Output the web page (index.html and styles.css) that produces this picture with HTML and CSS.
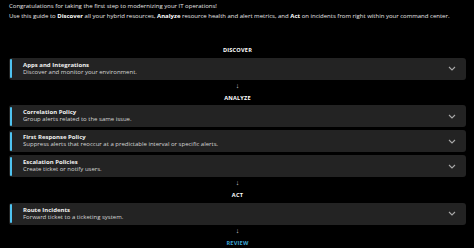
FILE: index.html
```html
<!DOCTYPE html>
<html>
<head>
<meta charset="utf-8">
<link rel="stylesheet" href="styles.css">
</head>
<body>
<div class="intro">
  <p>Congratulations for taking the first step to modernizing your IT operations!</p>
  <p>Use this guide to <b>Discover</b> all your hybrid resources, <b>Analyze</b> resource health and alert metrics, and <b>Act</b> on incidents from right within your command center.</p>
</div>
<div class="flow">
  <div class="stage first">DISCOVER</div>
  <div class="cards">
    <div class="card"><span class="bar"></span><div class="txt"><div class="title">Apps and Integrations</div><div class="desc">Discover and monitor your environment.</div></div><svg class="chev" viewBox="0 0 8 5"><path d="M1 1L4 4L7 1"/></svg></div>
  </div>
  <div class="arrow">↓</div>
  <div class="stage">ANALYZE</div>
  <div class="cards">
    <div class="card"><span class="bar"></span><div class="txt"><div class="title">Correlation Policy</div><div class="desc">Group alerts related to the same issue.</div></div><svg class="chev" viewBox="0 0 8 5"><path d="M1 1L4 4L7 1"/></svg></div>
    <div class="card"><span class="bar"></span><div class="txt"><div class="title">First Response Policy</div><div class="desc">Suppress alerts that reoccur at a predictable interval or specific alerts.</div></div><svg class="chev" viewBox="0 0 8 5"><path d="M1 1L4 4L7 1"/></svg></div>
    <div class="card"><span class="bar"></span><div class="txt"><div class="title">Escalation Policies</div><div class="desc">Create ticket or notify users.</div></div><svg class="chev" viewBox="0 0 8 5"><path d="M1 1L4 4L7 1"/></svg></div>
  </div>
  <div class="arrow">↓</div>
  <div class="stage">ACT</div>
  <div class="cards">
    <div class="card"><span class="bar"></span><div class="txt"><div class="title">Route Incidents</div><div class="desc">Forward ticket to a ticketing system.</div></div><svg class="chev" viewBox="0 0 8 5"><path d="M1 1L4 4L7 1"/></svg></div>
  </div>
  <div class="arrow">↓</div>
  <div class="stage review">REVIEW</div>
</div>
</body>
</html>
```
FILE: styles.css
```css
html, body {
  margin: 0;
  background: #000;
}
body {
  padding: 1px 8px 0 9px;
  font-family: "Open Sans", "Noto Sans", sans-serif;
  color: #e6e6e6;
  font-size: 6px;
}
.intro p {
  margin: 0;
  line-height: 10px;
  font-size: 6px;
}
.intro b { font-weight: 700; color: #fff; }
.flow {
  display: flex;
  flex-direction: column;
  align-items: stretch;
}
.stage {
  text-align: center;
  font-weight: 700;
  font-size: 5.6px;
  line-height: 8px;
  letter-spacing: 0.2px;
  color: #fff;
  margin-top: 4px;
  margin-bottom: 3.5px;
}
.stage.first { margin-top: 25px; }
.stage.review { color: #3ea6d6; }
.cards {
  display: flex;
  flex-direction: column;
  gap: 3px;
}
.card {
  height: 22px;
  background: #232323;
  border-radius: 3px;
  display: flex;
  align-items: center;
  padding: 0 8px 0 1px;
  box-sizing: border-box;
}
.bar {
  width: 2px;
  height: 19px;
  background: #4fc3f0;
  border-radius: 1px;
  flex: none;
}
.txt {
  flex: 1;
  margin-left: 11px;
  line-height: 7px;
}
.title {
  font-weight: 700;
  font-size: 6px;
  color: #f0f0f0;
}
.desc {
  font-size: 6px;
  color: #d6d6d6;
}
.chev {
  width: 8px;
  height: 5px;
  flex: none;
  margin-right: 2px;
}
.chev path {
  fill: none;
  stroke: #a8a8a8;
  stroke-width: 1.1;
}
.arrow {
  text-align: center;
  line-height: 8px;
  font-size: 7px;
  color: #d0d0d0;
  margin-top: 2px;
}
```
